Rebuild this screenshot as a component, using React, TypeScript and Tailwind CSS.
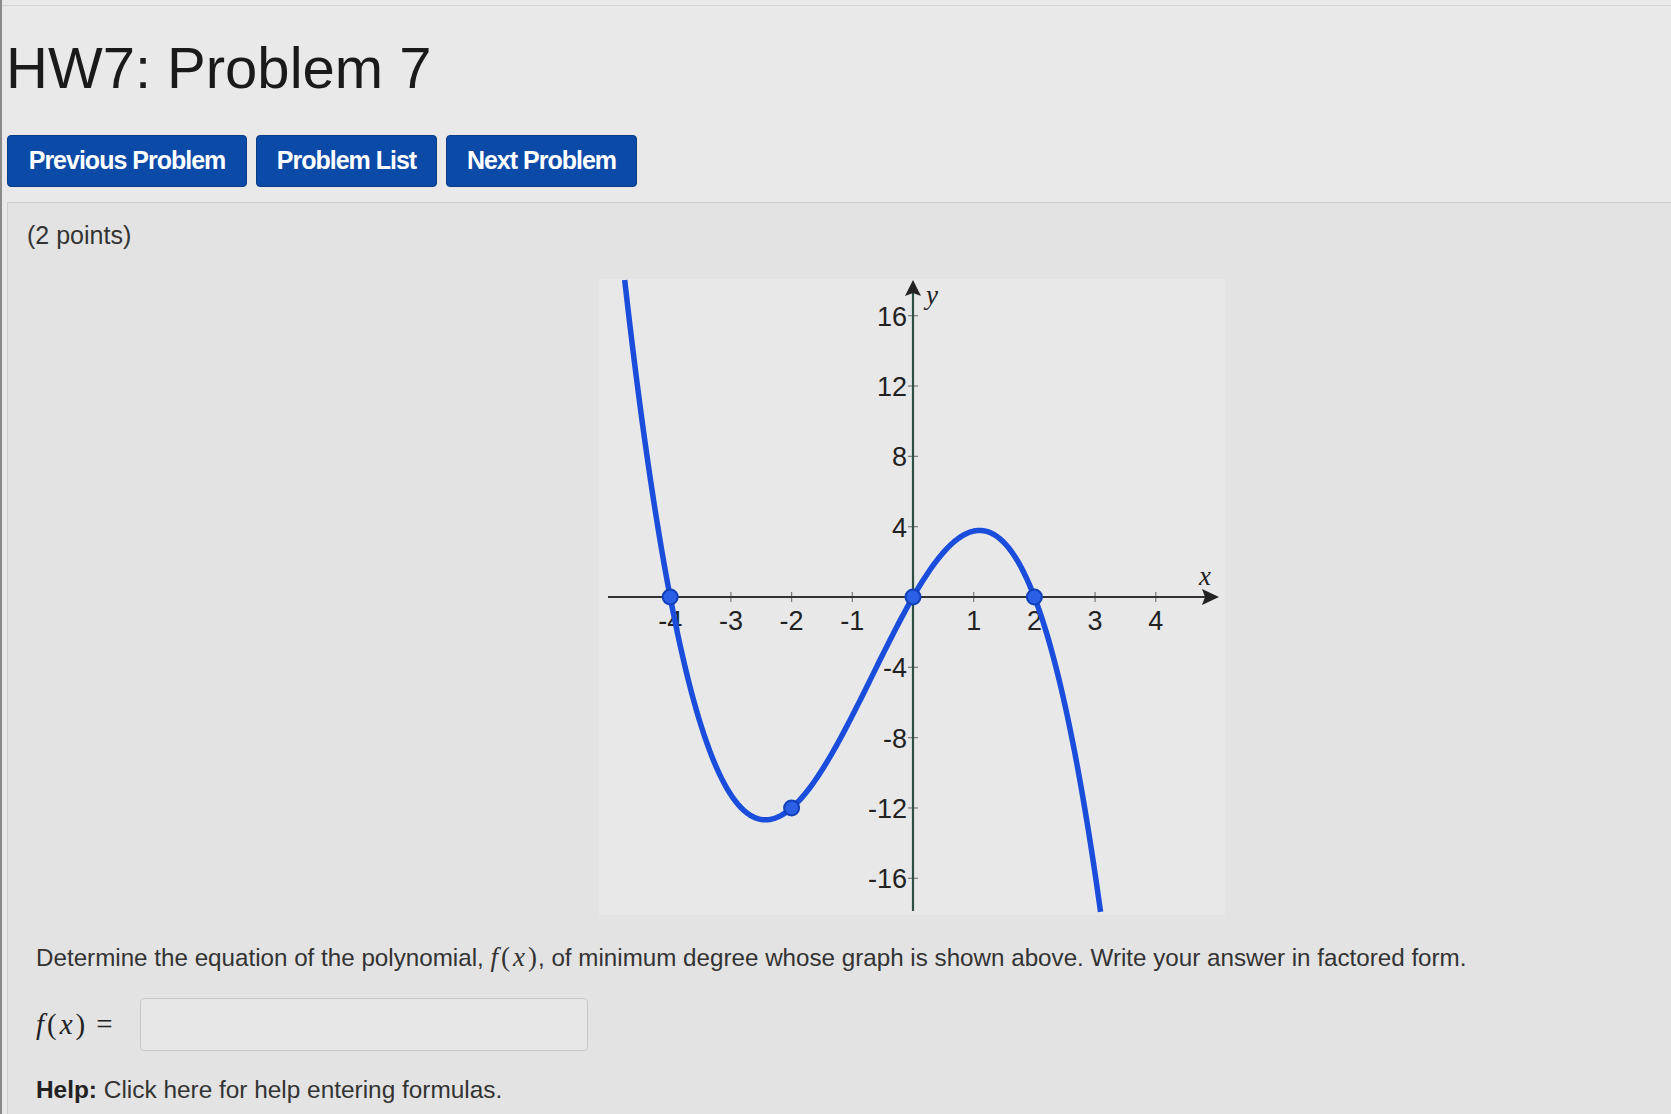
import React from "react";

const X0 = 314;
const Y0 = 318;
const UX = 60.7;
const UY = 17.58;
const sx = (x: number) => X0 + x * UX;
const sy = (y: number) => Y0 - y * UY;
const f = (x: number) => -0.75 * (x + 4) * x * (x - 2);

const curve = (() => {
  const pts: string[] = [];
  const a = -4.75;
  const b = 3.09;
  for (let i = 0; i <= 240; i++) {
    const x = a + ((b - a) * i) / 240;
    pts.push(`${sx(x).toFixed(2)},${sy(f(x)).toFixed(2)}`);
  }
  return "M" + pts.join(" L");
})();

const xTicks = [-4, -3, -2, -1, 1, 2, 3, 4];
const yTicks = [16, 12, 8, 4, -4, -8, -12, -16];

function Graph() {
  return (
    <svg width="626" height="636" viewBox="0 0 626 636" className="block overflow-visible">
      <rect x="0" y="0" width="626" height="636" fill="#e8e8e8" />
      {/* ticks */}
      {xTicks.map((t) => (
        <line key={"xt" + t} x1={sx(t)} x2={sx(t)} y1={Y0 - 5} y2={Y0 + 5} stroke="#7a7a7a" strokeWidth="1.2" />
      ))}
      {yTicks.map((t) => (
        <line key={"yt" + t} x1={X0 - 5} x2={X0 + 5} y1={sy(t)} y2={sy(t)} stroke="#7a7a7a" strokeWidth="1.2" />
      ))}
      {/* axes */}
      <line x1="9" y1={Y0} x2="606" y2={Y0} stroke="#333" strokeWidth="2.2" />
      <polygon points={`620,${Y0} 603,${Y0 - 8} 606,${Y0} 603,${Y0 + 8}`} fill="#222" />
      <line x1={X0} y1="632" x2={X0} y2="14" stroke="#2e4f45" strokeWidth="2.2" />
      <polygon points={`${X0},1 ${X0 - 8},17 ${X0},14 ${X0 + 8},17`} fill="#222" />
      {/* labels */}
      <g fontFamily='"Liberation Sans", Arial, sans-serif' fontSize="27" fill="#222">
        {xTicks.map((t) => (
          <text key={"xl" + t} x={sx(t)} y={Y0 + 33} textAnchor="middle">
            {t < 0 ? "-" + Math.abs(t) : String(t)}
          </text>
        ))}
        {yTicks.map((t) => (
          <text key={"yl" + t} x={X0 - 6} y={sy(t) + 10} textAnchor="end">
            {t < 0 ? "-" + Math.abs(t) : String(t)}
          </text>
        ))}
      </g>
      <text x="327" y="25" fontFamily='"Liberation Serif", serif' fontStyle="italic" fontSize="27" fill="#222">
        y
      </text>
      <text x="600" y="306" fontFamily='"Liberation Serif", serif' fontStyle="italic" fontSize="27" fill="#222">
        x
      </text>
      {/* curve */}
      <path d={curve} fill="none" stroke="#1a4ddb" strokeWidth="5.5" strokeLinejoin="round" />
      {[
        [-4, 0],
        [0, 0],
        [2, 0],
        [-2, -12],
      ].map(([x, y]) => (
        <circle key={x + "," + y} cx={sx(x)} cy={sy(y)} r="7.5" fill="#2a5fe6" stroke="#1240b8" strokeWidth="2" />
      ))}
    </svg>
  );
}

function MathF({ size }: { size: string }) {
  return (
    <span className={`${size} whitespace-nowrap`} style={{ fontFamily: '"Liberation Serif", serif' }}>
      <i className="pr-[2px]">f</i>
      <span className="px-[1px]">(</span>
      <i className="px-[2px]">x</i>
      <span className="px-[1px]">)</span>
    </span>
  );
}

export default function App() {
  return (
    <div
      className="min-h-screen bg-[#e9e9e9] text-[#222] border-l-2 border-[#8a8a8a] overflow-hidden"
      style={{ fontFamily: '"Liberation Sans", Arial, sans-serif' }}
    >
      <div className="h-[6px] border-b border-[#d6d6d6]" />

      <h1 className="mt-[33px] pl-[4px] text-[58px] leading-[58px] font-normal text-[#1a1a1a]">HW7: Problem 7</h1>

      <div className="mt-[38px] pl-[5px] flex gap-[9px]">
        <button className="h-[52px] w-[240px] rounded-[4px] bg-[#0c4aa8] border border-[#083b88] text-white font-bold text-[25px] tracking-[-0.04em]">
          Previous Problem
        </button>
        <button className="h-[52px] w-[181px] rounded-[4px] bg-[#0c4aa8] border border-[#083b88] text-white font-bold text-[25px] tracking-[-0.04em]">
          Problem List
        </button>
        <button className="h-[52px] w-[191px] rounded-[4px] bg-[#0c4aa8] border border-[#083b88] text-white font-bold text-[25px] tracking-[-0.04em]">
          Next Problem
        </button>
      </div>

      <div className="mt-[15px] ml-[5px] border-t border-l border-[#cfcfcf] bg-[#e3e3e3] pt-[18px] pl-[19px] pb-[40px]">
        <div className="text-[25px] leading-[29px] text-[#333]">(2 points)</div>

        <div className="mt-[29px] ml-[572px]">
          <Graph />
        </div>

        <p className="mt-[28px] pl-[9px] text-[24.2px] leading-[28px] text-[#333] whitespace-nowrap">
          Determine the equation of the polynomial, <MathF size="text-[27px]" />, of minimum degree whose graph is shown
          above. Write your answer in factored form.
        </p>

        <div className="mt-[26px] pl-[9px] flex items-center gap-[16px]">
          <span className="w-[88px] whitespace-nowrap text-[#222] flex items-center">
            <MathF size="text-[29px]" />
            <span className="ml-[10px] text-[29px]" style={{ fontFamily: '"Liberation Serif", serif' }}>
              =
            </span>
          </span>
          <div className="h-[53px] w-[448px] rounded-[4px] border border-[#c8c8c8] bg-[#e6e6e6]" />
        </div>

        <p className="mt-[25px] pl-[9px] text-[24.4px] leading-[28px] text-[#333]">
          <b className="text-[#222]">Help:</b> Click here for help entering formulas.
        </p>
      </div>
    </div>
  );
}
